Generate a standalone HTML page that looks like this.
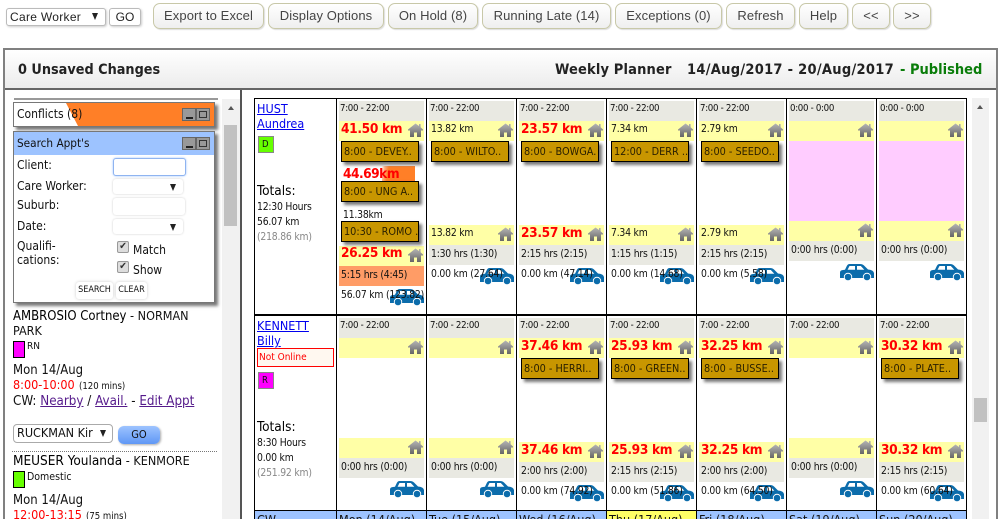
<!DOCTYPE html>
<html><head><meta charset="utf-8"><title>Weekly Planner</title>
<style>
html,body{margin:0;padding:0;background:#fff;overflow:hidden}
body{width:998px;height:519px;position:relative;font-family:"DejaVu Sans Condensed","DejaVu Sans","Liberation Sans",sans-serif;font-stretch:condensed;color:#111;overflow:hidden}
div,a,span.a{box-sizing:border-box}
.r{position:absolute}
.t{position:absolute;white-space:nowrap;line-height:16px;height:16px;font-size:11px;z-index:2}
.btn{position:absolute;top:3px;height:26px;border:1px solid #c8c8a8;border-radius:7px;background:linear-gradient(#fff,#efefef);box-shadow:1px 1px 1px #ddd;font-size:13px;letter-spacing:.1px;line-height:24px;text-align:center;color:#444;white-space:nowrap;font-family:"Liberation Sans",sans-serif}
.g{position:absolute;background:#e9e9e2;width:85px;height:20px}
.y{position:absolute;background:#ffffa6;width:85px;height:20px}
.p{position:absolute;background:#ffccff;width:85px;height:80px}
.ap{position:absolute;width:78px;height:21px;background:#c89600;border:1px solid #000;box-shadow:3px 3px 3px #777;font-size:10.8px;line-height:19px;padding-left:2px;white-space:nowrap;overflow:hidden;color:#2a2000;z-index:2}
.s{font-size:9.6px;letter-spacing:-.3px;margin-top:1px}
.b{font-size:13.6px;letter-spacing:-.33px;font-weight:bold;color:#f00;margin-top:1px}
.m{font-size:10.3px;letter-spacing:-.2px;margin-top:1px}
.h{position:absolute;width:15px;height:14px;z-index:1}
.c{position:absolute;width:34px;height:17px;z-index:1}
.ln{position:absolute;background:#000}
.wb{position:absolute;width:14px;height:13px;background:#999;border:1px solid #666}
.wb i{position:absolute;display:block}
a{color:#00e;text-decoration:underline}
.v{color:#551a8b}
.sel{position:absolute;background:#fff;border-radius:3px;box-shadow:0 0 2px #ccc}
.arr{position:absolute;width:0;height:0;border-left:3.5px solid transparent;border-right:3.5px solid transparent;border-top:7px solid #222}
.cb{position:absolute;width:12px;height:12px;background:#ddd;border:1px solid #999;border-radius:2px;font-size:10px;line-height:10px;text-align:center;color:#333}
.th{position:absolute;top:511px;height:8px;background:#9dc3ff;overflow:hidden}
.th span{position:absolute;left:2px;top:1px;font-size:12.5px;line-height:16px;white-space:nowrap}
.l{font-size:12px}
</style></head><body>
<svg width="0" height="0" style="position:absolute"><defs>
<linearGradient id="hg" x1="0" y1="0" x2="0" y2="1"><stop offset="0" stop-color="#b5b5b5"/><stop offset="1" stop-color="#666"/></linearGradient>
<symbol id="house" viewBox="0 0 15 14"><path d="M7.5 0.5 L11 3 V1 h1.6 V4.2 L15 6.5 V7.5 H13 V14 H9 V9.5 H6 V14 H2 V7.5 H0 V6.5 Z" fill="url(#hg)"/></symbol>
<symbol id="car" viewBox="0 0 34 17"><path d="M9.5 0 H20 Q22.5 0 24 1.5 L28 5.5 Q33.5 6 34 9 V14 H0 V8.5 Q0 6.3 3 6 L5 5.8 L6.8 2 Q7.8 0 9.5 0 Z" fill="#0b6cab"/><path d="M9.5 2 H15 V5.8 H7.6 Z M17 2 H20.8 L24.3 5.8 H17 Z" fill="#fff"/><circle cx="8" cy="13" r="4.2" fill="#fff"/><circle cx="8" cy="13" r="3.3" fill="#0b6cab"/><circle cx="27" cy="13" r="4.2" fill="#fff"/><circle cx="27" cy="13" r="3.3" fill="#0b6cab"/></symbol>
</defs></svg>

<!-- toolbar -->
<div class="r" style="left:6px;top:8px;width:100px;height:18px;border:1px solid #bbb;border-radius:3px;background:#fff;box-shadow:1px 1px 2px #ccc"></div>
<div class="t" style="left:10px;top:9px;font-size:12px;font-family:'Liberation Sans',sans-serif;color:#222;letter-spacing:.3px">Care Worker</div>
<div class="arr" style="left:92px;top:13px"></div>
<div class="r" style="left:109px;top:8px;width:32px;height:18px;border:1px solid #bbb;border-radius:3px;background:#fff;box-shadow:1px 1px 2px #ccc;font:12px/16px 'Liberation Sans',sans-serif;text-align:center;color:#222">GO</div>
<div class="btn" style="left:153px;width:111px">Export to Excel</div>
<div class="btn" style="left:268px;width:116px">Display Options</div>
<div class="btn" style="left:388px;width:90px">On Hold (8)</div>
<div class="btn" style="left:482px;width:129px">Running Late (14)</div>
<div class="btn" style="left:615px;width:107px">Exceptions (0)</div>
<div class="btn" style="left:726px;width:69px">Refresh</div>
<div class="btn" style="left:799px;width:49px">Help</div>
<div class="btn" style="left:852px;width:38px">&lt;&lt;</div>
<div class="btn" style="left:893px;width:38px">&gt;&gt;</div>

<!-- outer frame -->
<div class="r" style="left:3px;top:48px;width:995px;height:480px;border:2px solid #808080"></div>
<div class="r" style="left:5px;top:50px;width:991px;height:38px;background:linear-gradient(#fff,#ececec)"></div>
<div class="r" style="left:5px;top:88px;width:991px;height:2px;background:#666"></div>
<div class="r" style="left:240px;top:90px;width:2px;height:429px;background:#555"></div>
<div class="t" style="left:18px;top:62px;font-size:14.3px;font-weight:bold;color:#222">0 Unsaved Changes</div>
<div class="t" style="left:555px;top:62px;font-size:14.5px;font-weight:bold;color:#222;letter-spacing:.15px">Weekly Planner</div>
<div class="t" style="left:687px;top:62px;font-size:14.5px;font-weight:bold;color:#222;letter-spacing:.28px">14/Aug/2017 - 20/Aug/2017</div>
<div class="t" style="left:900px;top:62px;font-size:14.5px;font-weight:bold;color:#0a7d0a">- Published</div>

<!-- left scrollbar -->
<div class="r" style="left:222px;top:99px;width:18px;height:420px;background:#f1f1f1"></div>
<div class="r" style="left:224px;top:125px;width:13px;height:101px;background:#c1c1c1"></div>
<div class="r" style="left:228px;top:106px;width:0;height:0;border-left:3.5px solid transparent;border-right:3.5px solid transparent;border-bottom:4px solid #555"></div>
<div class="r" style="left:14px;top:98px;width:204px;height:2px;background:#999"></div>

<!-- conflicts -->
<div class="r" style="left:13px;top:102px;width:202px;height:25px;border:1px solid #777;box-shadow:3px 3px 3px #777;background:#fff"></div>
<div class="r" style="left:14px;top:103px;width:200px;height:23px;background:#ff7f27;clip-path:polygon(52px 0,100% 0,100% 100%,64px 100%)"></div>
<div class="t" style="left:17px;top:106px;font-size:12px">Conflicts (8)</div>
<div class="wb" style="left:182px;top:108px"><i style="left:3px;top:8px;width:7px;height:2px;background:#222"></i></div>
<div class="wb" style="left:196px;top:108px"><i style="left:2px;top:2px;width:8px;height:7px;border:1px solid #333;box-sizing:border-box"></i></div>

<!-- search -->
<div class="r" style="left:13px;top:131px;width:202px;height:172px;border:1px solid #777;box-shadow:3px 3px 3px #777;background:#fff"></div>
<div class="r" style="left:14px;top:132px;width:200px;height:23px;background:#9dc3ff"></div>
<div class="t" style="left:17px;top:135px;font-size:11.7px">Search Appt's</div>
<div class="wb" style="left:182px;top:137px"><i style="left:3px;top:8px;width:7px;height:2px;background:#222"></i></div>
<div class="wb" style="left:196px;top:137px"><i style="left:2px;top:2px;width:8px;height:7px;border:1px solid #333;box-sizing:border-box"></i></div>
<div class="t l" style="left:17px;top:157px">Client:</div>
<div class="t l" style="left:17px;top:178px">Care Worker:</div>
<div class="t l" style="left:17px;top:197px">Suburb:</div>
<div class="t l" style="left:17px;top:218px">Date:</div>
<div class="t l" style="left:17px;top:238px">Qualifi-</div>
<div class="t l" style="left:17px;top:252px">cations:</div>
<div class="r" style="left:113px;top:158px;width:73px;height:18px;border:1px solid #8fb4f0;border-radius:3px;box-shadow:0 0 2px #9dc3ff;background:#fff"></div>
<div class="sel" style="left:113px;top:179px;width:70px;height:15px"></div><div class="arr" style="left:170px;top:184px"></div>
<div class="sel" style="left:113px;top:198px;width:72px;height:17px"></div>
<div class="sel" style="left:113px;top:219px;width:70px;height:15px"></div><div class="arr" style="left:170px;top:224px"></div>
<div class="cb" style="left:117px;top:241px">✔</div><div class="t l" style="left:133px;top:242px">Match</div>
<div class="cb" style="left:117px;top:261px">✔</div><div class="t l" style="left:133px;top:262px">Show</div>
<div class="r" style="left:76px;top:282px;width:37px;height:17px;background:#fff;border-radius:3px;box-shadow:0 0 3px #ccc;font-size:9px;line-height:17px;text-align:center">SEARCH</div>
<div class="r" style="left:116px;top:282px;width:31px;height:17px;background:#fff;border-radius:3px;box-shadow:0 0 3px #ccc;font-size:9px;line-height:17px;text-align:center">CLEAR</div>

<!-- appointment list -->
<div class="t" style="left:13px;top:308px;font-size:12.5px"><span style="font-size:13px;color:#000">AMBROSIO Cortney</span> - NORMAN</div>
<div class="t" style="left:13px;top:323px;font-size:12.5px">PARK</div>
<div class="r" style="left:13px;top:341px;width:12px;height:17px;background:#f0f;border:1px solid #000"></div>
<div class="t" style="left:27px;top:339px;font-size:10px">RN</div>
<div class="t" style="left:13px;top:363px;font-size:13px">Mon 14/Aug</div>
<div class="t" style="left:13px;top:377px;font-size:12.5px;color:#f00">8:00-10:00</div>
<div class="t" style="left:79px;top:379px;font-size:9.5px">(120 mins)</div>
<div class="t" style="left:13px;top:394px;font-size:13.3px">CW: <a class="v" href="#">Nearby</a> / <a class="v" href="#">Avail.</a> - <a class="v" href="#">Edit Appt</a></div>
<div class="r" style="left:13px;top:424px;width:100px;height:19px;border:1px solid #aaa;border-radius:4px;background:#fff"></div>
<div class="t" style="left:17px;top:425px;font-size:12.5px">RUCKMAN Kir</div>
<div class="arr" style="left:100px;top:430px"></div>
<div class="r" style="left:118px;top:426px;width:42px;height:18px;border-radius:6px;background:linear-gradient(#9dc3ff,#5f97f5);box-shadow:1px 1px 2px #aaa;font-size:11px;line-height:17px;text-align:center">GO</div>
<div class="r" style="left:12px;top:451px;width:205px;border-top:1px dotted #777"></div>
<div class="t" style="left:13px;top:453px;font-size:12.5px"><span style="font-size:13.5px;color:#000">MEUSER Youlanda</span> - KENMORE</div>
<div class="r" style="left:13px;top:471px;width:12px;height:17px;background:#6f0;border:1px solid #000"></div>
<div class="t" style="left:27px;top:469px;font-size:10.5px">Domestic</div>
<div class="t" style="left:13px;top:493px;font-size:13px">Mon 14/Aug</div>
<div class="t" style="left:13px;top:507px;font-size:12.5px;color:#f00">12:00-13:15</div>
<div class="t" style="left:86px;top:509px;font-size:9.5px">(75 mins)</div>

<!-- right scrollbar -->
<div class="r" style="left:972px;top:98px;width:17px;height:421px;background:#f1f1f1"></div>
<div class="r" style="left:974px;top:398px;width:13px;height:24px;background:#c1c1c1"></div>
<div class="r" style="left:977px;top:105px;width:0;height:0;border-left:3.5px solid transparent;border-right:3.5px solid transparent;border-bottom:4px solid #555"></div>

<!-- header row -->
<div class="th" style="left:255px;width:81px"><span>CW</span></div>
<div class="th" style="left:337px;width:89px"><span>Mon (14/Aug)</span></div>
<div class="th" style="left:427px;width:89px"><span>Tue (15/Aug)</span></div>
<div class="th" style="left:517px;width:89px"><span>Wed (16/Aug)</span></div>
<div class="th" style="left:607px;width:89px;background:#ffff66"><span>Thu (17/Aug)</span></div>
<div class="th" style="left:697px;width:89px"><span>Fri (18/Aug)</span></div>
<div class="th" style="left:787px;width:89px"><span>Sat (19/Aug)</span></div>
<div class="th" style="left:877px;width:89px"><span>Sun (20/Aug)</span></div>

<!-- ROW 1 backgrounds -->
<div class="g" style="left:339px;top:101px"></div><div class="g" style="left:429px;top:101px"></div><div class="g" style="left:519px;top:101px"></div><div class="g" style="left:609px;top:101px"></div><div class="g" style="left:699px;top:101px"></div><div class="g" style="left:789px;top:101px"></div><div class="g" style="left:879px;top:101px"></div>
<div class="y" style="left:339px;top:121px"></div><div class="y" style="left:429px;top:121px"></div><div class="y" style="left:519px;top:121px"></div><div class="y" style="left:609px;top:121px"></div><div class="y" style="left:699px;top:121px"></div><div class="y" style="left:789px;top:121px"></div><div class="y" style="left:879px;top:121px"></div>
<div class="p" style="left:789px;top:141px"></div><div class="p" style="left:879px;top:141px"></div>
<div class="y" style="left:339px;top:246px"></div><div class="r" style="left:339px;top:266px;width:85px;height:20px;background:#ff9c66"></div>
<div class="y" style="left:429px;top:225px"></div><div class="g" style="left:429px;top:245px"></div>
<div class="y" style="left:519px;top:225px"></div><div class="g" style="left:519px;top:245px"></div>
<div class="y" style="left:609px;top:225px"></div><div class="g" style="left:609px;top:245px"></div>
<div class="y" style="left:699px;top:225px"></div><div class="g" style="left:699px;top:245px"></div>
<div class="y" style="left:789px;top:221px"></div><div class="g" style="left:789px;top:241px"></div>
<div class="y" style="left:879px;top:221px"></div><div class="g" style="left:879px;top:241px"></div>

<!-- ROW 2 backgrounds -->
<div class="g" style="left:339px;top:318px"></div><div class="g" style="left:429px;top:318px"></div><div class="g" style="left:519px;top:318px"></div><div class="g" style="left:609px;top:318px"></div><div class="g" style="left:699px;top:318px"></div><div class="g" style="left:789px;top:318px"></div><div class="g" style="left:879px;top:318px"></div>
<div class="y" style="left:339px;top:338px"></div><div class="y" style="left:429px;top:338px"></div><div class="y" style="left:519px;top:338px"></div><div class="y" style="left:609px;top:338px"></div><div class="y" style="left:699px;top:338px"></div><div class="y" style="left:789px;top:338px"></div><div class="y" style="left:879px;top:338px"></div>
<div class="y" style="left:339px;top:438px"></div><div class="g" style="left:339px;top:458px"></div>
<div class="y" style="left:429px;top:438px"></div><div class="g" style="left:429px;top:458px"></div>
<div class="y" style="left:789px;top:438px"></div><div class="g" style="left:789px;top:458px"></div>
<div class="y" style="left:519px;top:442px"></div><div class="g" style="left:519px;top:462px"></div>
<div class="y" style="left:609px;top:442px"></div><div class="g" style="left:609px;top:462px"></div>
<div class="y" style="left:699px;top:442px"></div><div class="g" style="left:699px;top:462px"></div>
<div class="y" style="left:879px;top:442px"></div><div class="g" style="left:879px;top:462px"></div>

<!-- table lines -->
<div class="ln" style="left:254px;top:98px;width:713px;height:1px"></div>
<div class="ln" style="left:254px;top:314px;width:713px;height:2px"></div>
<div class="ln" style="left:254px;top:510px;width:713px;height:1px"></div>
<div class="ln" style="left:254px;top:98px;width:1px;height:421px"></div>
<div class="ln" style="left:336px;top:98px;width:1px;height:421px"></div>
<div class="ln" style="left:426px;top:98px;width:1px;height:421px"></div>
<div class="ln" style="left:516px;top:98px;width:1px;height:421px"></div>
<div class="ln" style="left:606px;top:98px;width:1px;height:421px"></div>
<div class="ln" style="left:696px;top:98px;width:1px;height:421px"></div>
<div class="ln" style="left:786px;top:98px;width:1px;height:421px"></div>
<div class="ln" style="left:876px;top:98px;width:1px;height:421px"></div>
<div class="ln" style="left:966px;top:98px;width:1px;height:421px"></div>

<!-- names -->
<div class="t" style="left:257px;top:101px;font-size:12.5px"><a href="#">HUST</a></div>
<div class="t" style="left:257px;top:116px;font-size:12.5px"><a href="#">Aundrea</a></div>
<div class="r" style="left:258px;top:136px;width:16px;height:17px;background:#6f0;border:1px solid #888;font-size:9.5px;line-height:15px;padding-left:3px">D</div>
<div class="t" style="left:257px;top:183px;font-size:13.5px;color:#000">Totals:</div>
<div class="t m" style="left:257px;top:198px">12:30 Hours</div>
<div class="t m" style="left:257px;top:213px">56.07 km</div>
<div class="t m" style="left:257px;top:228px;color:#888">(218.86 km)</div>

<div class="t" style="left:257px;top:318px;font-size:12.5px"><a href="#">KENNETT</a></div>
<div class="t" style="left:257px;top:333px;font-size:12.5px"><a href="#">Billy</a></div>
<div class="r" style="left:257px;top:348px;width:77px;height:19px;background:#fff8f0;border:1px solid #f00;color:#f00;font-size:10px;line-height:17px;padding-left:1px">Not Online</div>
<div class="r" style="left:258px;top:372px;width:16px;height:17px;background:#f0f;border:1px solid #888;font-size:9.5px;line-height:15px;padding-left:3px">R</div>
<div class="t" style="left:257px;top:419px;font-size:13.5px;color:#000">Totals:</div>
<div class="t m" style="left:257px;top:434px">8:30 Hours</div>
<div class="t m" style="left:257px;top:449px">0.00 km</div>
<div class="t m" style="left:257px;top:464px;color:#888">(251.92 km)</div>

<!-- ROW 1 text -->
<div class="t s" style="left:340px;top:100px">7:00 - 22:00</div><div class="t s" style="left:430px;top:100px">7:00 - 22:00</div><div class="t s" style="left:520px;top:100px">7:00 - 22:00</div><div class="t s" style="left:610px;top:100px">7:00 - 22:00</div><div class="t s" style="left:700px;top:100px">7:00 - 22:00</div><div class="t s" style="left:790px;top:100px">0:00 - 0:00</div><div class="t s" style="left:880px;top:100px">0:00 - 0:00</div>
<div class="t b" style="left:341px;top:120px">41.50 km</div>
<div class="t m" style="left:431px;top:120px">13.82 km</div>
<div class="t b" style="left:521px;top:120px">23.57 km</div>
<div class="t m" style="left:611px;top:120px">7.34 km</div>
<div class="t m" style="left:701px;top:120px">2.79 km</div>

<div class="ap" style="left:341px;top:141px">8:00 - DEVEY..</div>
<div class="ap" style="left:431px;top:141px">8:00 - WILTO..</div>
<div class="ap" style="left:521px;top:141px">8:00 - BOWGA.</div>
<div class="ap" style="left:611px;top:141px">12:00 - DERR ..</div>
<div class="ap" style="left:701px;top:141px">8:00 - SEEDO..</div>

<div class="r" style="left:382px;top:166px;width:33px;height:15px;background:linear-gradient(100deg,#fff 0,#ffb080 3px,#ff7f27 7px)"></div>
<div class="t b" style="left:343px;top:165px;letter-spacing:-.5px">44.69km</div>
<div class="ap" style="left:341px;top:181px">8:00 - UNG A..</div>
<div class="t m" style="left:343px;top:206px">11.38km</div>
<div class="ap" style="left:341px;top:221px">10:30 - ROMO .</div>

<div class="t b" style="left:341px;top:244px">26.25 km</div>
<div class="t m" style="left:341px;top:266px">5:15 hrs (4:45)</div>
<div class="t m" style="left:341px;top:286px">56.07 km (123.82)</div>

<div class="t m" style="left:431px;top:224px">13.82 km</div>
<div class="t b" style="left:521px;top:224px">23.57 km</div>
<div class="t m" style="left:611px;top:224px">7.34 km</div>
<div class="t m" style="left:701px;top:224px">2.79 km</div>
<div class="t m" style="left:431px;top:245px">1:30 hrs (1:30)</div>
<div class="t m" style="left:521px;top:245px">2:15 hrs (2:15)</div>
<div class="t m" style="left:611px;top:245px">1:15 hrs (1:15)</div>
<div class="t m" style="left:701px;top:245px">2:15 hrs (2:15)</div>
<div class="t m" style="left:791px;top:241px">0:00 hrs (0:00)</div>
<div class="t m" style="left:881px;top:241px">0:00 hrs (0:00)</div>
<div class="t m" style="left:431px;top:265px">0.00 km (27.64)</div>
<div class="t m" style="left:521px;top:265px">0.00 km (47.14)</div>
<div class="t m" style="left:611px;top:265px">0.00 km (14.68)</div>
<div class="t m" style="left:701px;top:265px">0.00 km (5.58)</div>

<!-- ROW 2 text -->
<div class="t s" style="left:340px;top:317px">7:00 - 22:00</div><div class="t s" style="left:430px;top:317px">7:00 - 22:00</div><div class="t s" style="left:520px;top:317px">7:00 - 22:00</div><div class="t s" style="left:610px;top:317px">7:00 - 22:00</div><div class="t s" style="left:700px;top:317px">7:00 - 22:00</div><div class="t s" style="left:790px;top:317px">7:00 - 22:00</div><div class="t s" style="left:880px;top:317px">7:00 - 22:00</div>
<div class="t b" style="left:521px;top:337px">37.46 km</div>
<div class="t b" style="left:611px;top:337px">25.93 km</div>
<div class="t b" style="left:701px;top:337px">32.25 km</div>
<div class="t b" style="left:881px;top:337px">30.32 km</div>
<div class="ap" style="left:521px;top:358px">8:00 - HERRI..</div>
<div class="ap" style="left:611px;top:358px">8:00 - GREEN..</div>
<div class="ap" style="left:701px;top:358px">8:00 - BUSSE..</div>
<div class="ap" style="left:881px;top:358px">8:00 - PLATE..</div>
<div class="t b" style="left:521px;top:441px">37.46 km</div>
<div class="t b" style="left:611px;top:441px">25.93 km</div>
<div class="t b" style="left:701px;top:441px">32.25 km</div>
<div class="t b" style="left:881px;top:441px">30.32 km</div>
<div class="t m" style="left:341px;top:458px">0:00 hrs (0:00)</div>
<div class="t m" style="left:431px;top:458px">0:00 hrs (0:00)</div>
<div class="t m" style="left:791px;top:458px">0:00 hrs (0:00)</div>
<div class="t m" style="left:521px;top:462px">2:00 hrs (2:00)</div>
<div class="t m" style="left:611px;top:462px">2:15 hrs (2:15)</div>
<div class="t m" style="left:701px;top:462px">2:00 hrs (2:00)</div>
<div class="t m" style="left:881px;top:462px">2:15 hrs (2:15)</div>
<div class="t m" style="left:521px;top:482px">0.00 km (74.92)</div>
<div class="t m" style="left:611px;top:482px">0.00 km (51.86)</div>
<div class="t m" style="left:701px;top:482px">0.00 km (64.50)</div>
<div class="t m" style="left:881px;top:482px">0.00 km (60.64)</div>

<!-- houses row 1 -->
<svg class="h" style="left:408px;top:123px"><use href="#house"/></svg><svg class="h" style="left:498px;top:123px"><use href="#house"/></svg><svg class="h" style="left:588px;top:123px"><use href="#house"/></svg><svg class="h" style="left:678px;top:123px"><use href="#house"/></svg><svg class="h" style="left:768px;top:123px"><use href="#house"/></svg><svg class="h" style="left:858px;top:123px"><use href="#house"/></svg><svg class="h" style="left:948px;top:123px"><use href="#house"/></svg>
<svg class="h" style="left:408px;top:248px"><use href="#house"/></svg>
<svg class="h" style="left:498px;top:227px"><use href="#house"/></svg><svg class="h" style="left:588px;top:227px"><use href="#house"/></svg><svg class="h" style="left:678px;top:227px"><use href="#house"/></svg><svg class="h" style="left:768px;top:227px"><use href="#house"/></svg>
<svg class="h" style="left:858px;top:223px"><use href="#house"/></svg><svg class="h" style="left:948px;top:223px"><use href="#house"/></svg>
<!-- houses row 2 -->
<svg class="h" style="left:408px;top:340px"><use href="#house"/></svg><svg class="h" style="left:498px;top:340px"><use href="#house"/></svg><svg class="h" style="left:588px;top:340px"><use href="#house"/></svg><svg class="h" style="left:678px;top:340px"><use href="#house"/></svg><svg class="h" style="left:768px;top:340px"><use href="#house"/></svg><svg class="h" style="left:858px;top:340px"><use href="#house"/></svg><svg class="h" style="left:948px;top:340px"><use href="#house"/></svg>
<svg class="h" style="left:408px;top:440px"><use href="#house"/></svg><svg class="h" style="left:498px;top:440px"><use href="#house"/></svg><svg class="h" style="left:858px;top:440px"><use href="#house"/></svg>
<svg class="h" style="left:588px;top:444px"><use href="#house"/></svg><svg class="h" style="left:678px;top:444px"><use href="#house"/></svg><svg class="h" style="left:768px;top:444px"><use href="#house"/></svg><svg class="h" style="left:948px;top:444px"><use href="#house"/></svg>

<!-- cars row 1 -->
<svg class="c" style="left:390px;top:289px"><use href="#car"/></svg>
<svg class="c" style="left:480px;top:268px"><use href="#car"/></svg><svg class="c" style="left:570px;top:268px"><use href="#car"/></svg><svg class="c" style="left:660px;top:268px"><use href="#car"/></svg><svg class="c" style="left:750px;top:268px"><use href="#car"/></svg>
<svg class="c" style="left:840px;top:264px"><use href="#car"/></svg><svg class="c" style="left:930px;top:264px"><use href="#car"/></svg>
<!-- cars row 2 -->
<svg class="c" style="left:390px;top:481px"><use href="#car"/></svg><svg class="c" style="left:480px;top:481px"><use href="#car"/></svg><svg class="c" style="left:840px;top:481px"><use href="#car"/></svg>
<svg class="c" style="left:570px;top:485px"><use href="#car"/></svg><svg class="c" style="left:660px;top:485px"><use href="#car"/></svg><svg class="c" style="left:750px;top:485px"><use href="#car"/></svg><svg class="c" style="left:930px;top:485px"><use href="#car"/></svg>
</body></html>
